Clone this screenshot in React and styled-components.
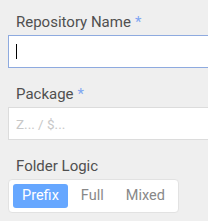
import React, { useState } from "react";
import styled, { createGlobalStyle } from "styled-components";

const GlobalStyle = createGlobalStyle`
  html, body {
    margin: 0;
    padding: 0;
    background: #efefef;
    font-family: Roboto, "Liberation Sans", sans-serif;
  }
`;

const Page = styled.div`
  width: 208px;
  height: 221px;
  overflow: hidden;
  padding: 12px 0 0 8px;
  box-sizing: border-box;
`;

const Field = styled.div`
  display: flex;
  flex-direction: column;
  margin-bottom: 16px;
`;

const Label = styled.label`
  font-size: 15px;
  line-height: 20px;
  color: #505050;
  padding-left: 8px;
  margin-bottom: 3px;
`;

const Required = styled.span`
  color: #7fa6f2;
  margin-left: 4px;
`;

const Input = styled.input`
  width: 230px;
  height: 33px;
  box-sizing: border-box;
  border: 1px solid ${(p) => (p.$focused ? "#8eaadf" : "#dcdcdc")};
  background: #fff;
  padding: 0 7px;
  font-family: inherit;
  font-size: 13.5px;
  color: #333;
  outline: none;
  border-radius: 0;

  &::placeholder {
    color: #c8c8c8;
  }
`;

const Caret = styled.span`
  position: absolute;
  left: 8px;
  top: 9px;
  width: 1px;
  height: 15px;
  background: #000;
`;

const InputWrap = styled.div`
  position: relative;
`;

const Segmented = styled.div`
  display: inline-flex;
  align-self: flex-start;
  gap: 4px;
  padding: 4px;
  background: #fff;
  border: 1px solid #e2e2e2;
  border-radius: 4px;
`;

const Segment = styled.button`
  height: 24px;
  padding: 0 9px;
  border: none;
  border-radius: 3px;
  font-family: inherit;
  font-size: 14.5px;
  line-height: 24px;
  cursor: pointer;
  background: ${(p) => (p.$active ? "#66a7ff" : "transparent")};
  color: ${(p) => (p.$active ? "#fff" : "#888")};
`;

const App = () => {
  const [logic, setLogic] = useState("Prefix");

  return (
    <>
      <GlobalStyle />
      <Page>
        <Field>
          <Label>
            Repository Name<Required>*</Required>
          </Label>
          <InputWrap>
            <Input $focused type="text" />
            <Caret />
          </InputWrap>
        </Field>
        <Field>
          <Label>
            Package<Required>*</Required>
          </Label>
          <Input type="text" placeholder="Z... / $..." />
        </Field>
        <Field>
          <Label>Folder Logic</Label>
          <Segmented>
            {["Prefix", "Full", "Mixed"].map((opt) => (
              <Segment
                key={opt}
                $active={logic === opt}
                onClick={() => setLogic(opt)}
              >
                {opt}
              </Segment>
            ))}
          </Segmented>
        </Field>
      </Page>
    </>
  );
};

export default App;
